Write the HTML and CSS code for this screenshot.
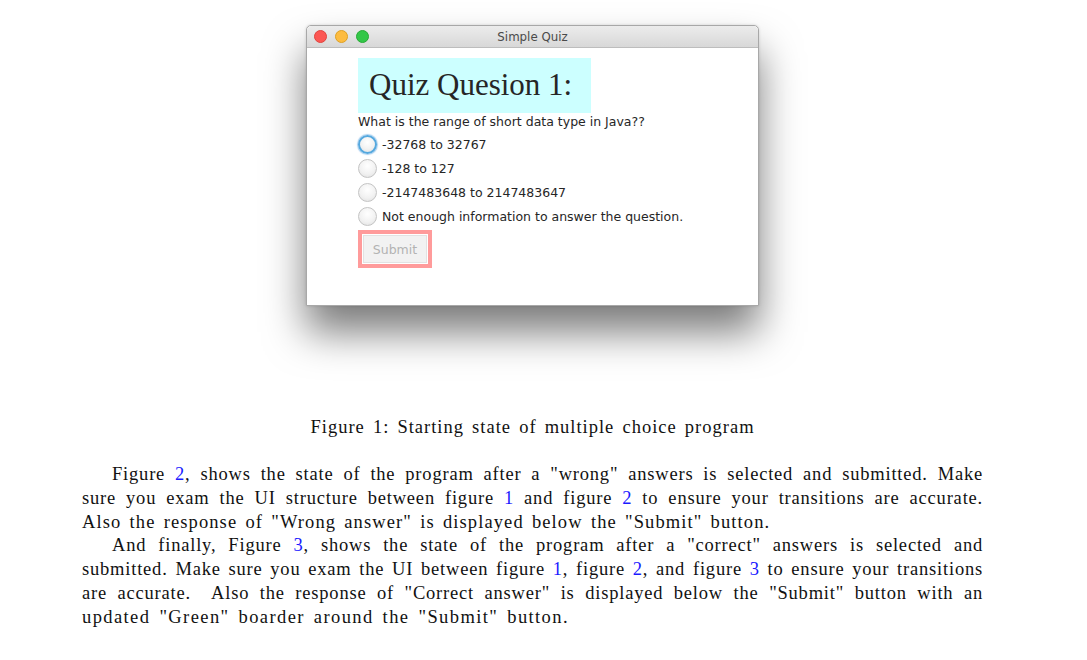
FILE: index.html
```html
<!DOCTYPE html>
<html>
<head>
<meta charset="utf-8">
<link rel="stylesheet" href="styles.css">
</head>
<body>
<div class="page">
  <div class="figure">
    <div class="window">
      <div class="titlebar">
        <div class="lights">
          <span class="light red"></span>
          <span class="light yellow"></span>
          <span class="light green"></span>
        </div>
        <div class="title">Simple Quiz</div>
      </div>
      <div class="content">
        <div class="heading">Quiz Quesion 1:</div>
        <div class="question">What is the range of short data type in Java??</div>
        <div class="options">
          <div class="option"><span class="radio focused"></span><span>-32768 to 32767</span></div>
          <div class="option"><span class="radio"></span><span>-128 to 127</span></div>
          <div class="option"><span class="radio"></span><span>-2147483648 to 2147483647</span></div>
          <div class="option"><span class="radio"></span><span>Not enough information to answer the question.</span></div>
        </div>
        <div class="submit-wrap"><div class="submit">Submit</div></div>
      </div>
    </div>
    <div class="caption">Figure 1: Starting state of multiple choice program</div>
  </div>
  <div class="text">
    <span class="line first">Figure <span class="ref">2</span>, shows the state of the program after a "wrong" answers is selected and submitted. Make</span>
    <span class="line">sure you exam the UI structure between figure <span class="ref">1</span> and figure <span class="ref">2</span> to ensure your transitions are accurate.</span>
    <span class="line last">Also the response of "Wrong answer" is displayed below the "Submit" button.</span>
    <span class="line first">And finally, Figure <span class="ref">3</span>, shows the state of the program after a "correct" answers is selected and</span>
    <span class="line">submitted. Make sure you exam the UI between figure <span class="ref">1</span>, figure <span class="ref">2</span>, and figure <span class="ref">3</span> to ensure your transitions</span>
    <span class="line">are accurate.&nbsp; Also the response of "Correct answer" is displayed below the "Submit" button with an</span>
    <span class="line last wide">updated "Green" boarder around the "Submit" button.</span>
  </div>
</div>
</body>
</html>
```
FILE: styles.css
```css
html, body {
  margin: 0;
  padding: 0;
  background: #ffffff;
}
.page {
  margin-left: 82px;
  width: 901px;
  padding-top: 25px;
}
.figure {
  display: flex;
  flex-direction: column;
  align-items: center;
}
.window {
  width: 451px;
  height: 279px;
  border: 1px solid #a8a8a8;
  border-radius: 5px 5px 0 0;
  background: #ffffff;
  box-shadow: 0 26px 40px rgba(0, 0, 0, 0.52), 0 0 3px rgba(0, 0, 0, 0.15);
  display: flex;
  flex-direction: column;
}
.titlebar {
  height: 21px;
  border-bottom: 1px solid #bdbdbd;
  border-radius: 5px 5px 0 0;
  background: linear-gradient(#ececec, #d8d8d8);
  position: relative;
  display: flex;
  align-items: center;
  justify-content: center;
}
.lights {
  position: absolute;
  left: 7px;
  top: 4px;
  display: flex;
  gap: 8px;
}
.light {
  width: 13px;
  height: 13px;
  border-radius: 50%;
  box-sizing: border-box;
}
.red { background: #fc5753; border: 1px solid #e0443e; }
.yellow { background: #fdbc40; border: 1px solid #dea123; }
.green { background: #33c748; border: 1px solid #27aa35; }
.title {
  font-family: "DejaVu Sans", Verdana, sans-serif;
  font-size: 11.8px;
  color: #4a4a4a;
  padding-top: 1px;
}
.content {
  padding: 10px 0 0 51px;
  font-family: "DejaVu Sans", Verdana, sans-serif;
  color: #262626;
}
.heading {
  width: 233px;
  height: 55px;
  box-sizing: border-box;
  background: #ccffff;
  padding: 9px 0 0 11px;
  font-family: "Liberation Serif", "Times New Roman", serif;
  font-size: 31px;
  line-height: 36px;
  color: #262626;
}
.question {
  margin-top: 1px;
  font-size: 12.5px;
  line-height: 16px;
}
.options {
  margin-top: 4px;
  display: flex;
  flex-direction: column;
  gap: 4px;
}
.option {
  display: flex;
  align-items: center;
  gap: 5px;
  height: 20px;
  font-size: 12.5px;
}
.radio {
  width: 19px;
  height: 19px;
  border-radius: 50%;
  box-sizing: border-box;
  border: 1px solid #c4c4c4;
  background: radial-gradient(circle at 50% 35%, #ffffff 0%, #f2f2f2 55%, #dedede 100%);
}
.radio.focused {
  border: 2px solid #55a8de;
  box-shadow: 0 0 1px 1px rgba(110, 175, 230, 0.6);
}
.submit-wrap {
  margin-top: 4px;
  width: 74px;
  height: 38px;
  box-sizing: border-box;
  border: 4px solid #ff9b9b;
  padding: 1px;
  background: #fff;
}
.submit {
  height: 100%;
  background: #f2f2f2;
  border: 1px solid #e2e2e2;
  box-sizing: border-box;
  display: flex;
  align-items: center;
  justify-content: center;
  font-size: 12.5px;
  color: #b3b3b3;
}
.caption {
  margin-top: 110px;
  font-family: "Liberation Serif", "Times New Roman", serif;
  font-size: 18.5px;
  line-height: 22px;
  color: #111;
  letter-spacing: 1px;
  word-spacing: 2.5px;
}
.text {
  margin-top: 25px;
  font-family: "Liberation Serif", "Times New Roman", serif;
  font-size: 18.5px;
  line-height: 23.8px;
  color: #111;
  letter-spacing: 0.8px;
  word-spacing: 2px;
}
.line {
  display: block;
  text-align: justify;
  text-align-last: justify;
  white-space: nowrap;
}
.line.first {
  text-indent: 30px;
}
.line.last {
  text-align-last: left;
  letter-spacing: 1.1px;
  word-spacing: 2.5px;
}
.line.last.wide {
  letter-spacing: 1.4px;
  word-spacing: 3px;
}
.ref {
  color: #1a1aff;
}
```
